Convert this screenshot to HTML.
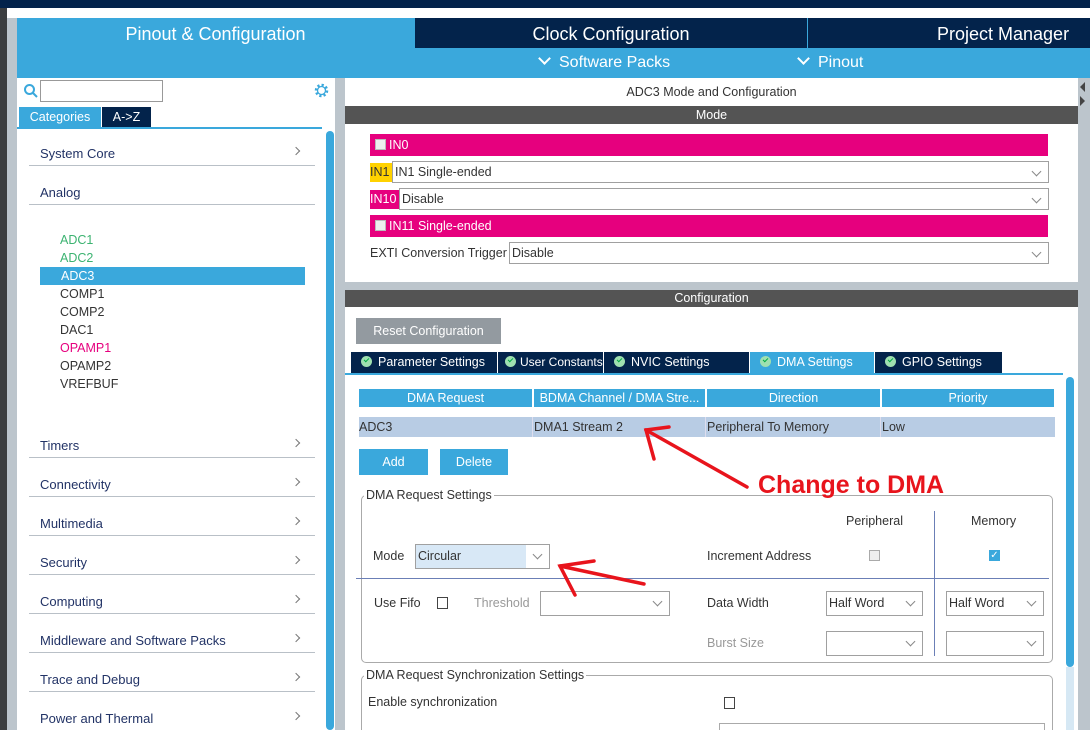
<!DOCTYPE html>
<html style="overflow:hidden;width:1090px;height:730px"><head><meta charset="utf-8"><style>
*{margin:0;padding:0;box-sizing:border-box}
body{width:1090px;height:730px;overflow:hidden;position:relative;background:#bcc5cc;font-family:"Liberation Sans",sans-serif;font-size:12px;color:#333}
.a{position:absolute}
.t{position:absolute;white-space:nowrap}
.cat{position:absolute;left:40px;font-size:13px;color:#223366}
.ln{position:absolute;left:29px;width:286px;height:1px;background:#b9c0c7}
.chev{position:absolute;left:293px;width:6px;height:6px;border-right:1.3px solid #777;border-top:1.3px solid #777;transform:rotate(45deg)}
.sel{position:absolute;border:1px solid #a0a0a0;background:#fff;height:22px;white-space:nowrap}
.sel:after{content:"";position:absolute;right:8px;top:6px;width:6px;height:6px;border-right:1px solid #888;border-bottom:1px solid #888;transform:rotate(45deg)}
.mag{background:#e6007e;color:#fff}
.cb{display:inline-block;width:11px;height:11px;background:#eee;border:1px solid #bbb;vertical-align:-1px;margin:0 3px 0 5px}
.tab{position:absolute;top:352px;height:21px;background:#03234b;color:#fff;font-size:12.5px;line-height:21px;padding-left:10px;white-space:nowrap;overflow:hidden}
.ok{display:inline-block;width:11px;height:11px;border-radius:50%;background:#9fe0b0;margin-right:6px;vertical-align:-1px;position:relative}
.ok:after{content:"";position:absolute;left:3px;top:2px;width:4px;height:2px;border-left:1.5px solid #0a4;border-bottom:1.5px solid #0a4;transform:rotate(-45deg)}
.th{position:absolute;top:389px;height:18px;background:#3aa8dc;color:#fff;font-size:12.5px;text-align:center;line-height:18px;white-space:nowrap;overflow:hidden}
.td{position:absolute;top:417px;height:20px;line-height:20px;font-size:12.5px;color:#333}
.btn{position:absolute;background:#3aa8dc;color:#fff;text-align:center;font-size:12.5px}
.dn{display:inline-block;width:9px;height:9px;border-right:2px solid #fff;border-bottom:2px solid #fff;transform:rotate(45deg);margin-right:10px;vertical-align:4px}
</style></head><body>
<div class="a" style="left:0;top:0;width:7px;height:730px;background:#3c3e40"></div>
<div class="a" style="left:0;top:0;width:1090px;height:8px;background:#03234b"></div>
<div class="a" style="left:7px;top:8px;width:1083px;height:10px;background:#fff"></div>
<div class="a" style="left:17px;top:18px;width:1073px;height:60px;background:#3aa8dc"></div>
<div class="t" style="left:17px;top:24px;width:397px;text-align:center;color:#fff;font-size:18px">Pinout &amp; Configuration</div>
<div class="a" style="left:415px;top:18px;width:392px;height:30px;background:#03234b"></div>
<div class="t" style="left:415px;top:24px;width:392px;text-align:center;color:#fff;font-size:18px">Clock Configuration</div>
<div class="a" style="left:808px;top:18px;width:282px;height:30px;background:#03234b"></div>
<div class="t" style="left:937px;top:24px;color:#fff;font-size:18px">Project Manager</div>
<div class="t" style="left:540px;top:54px;color:#fff;font-size:16px"><span class="dn"></span>Software Packs</div>
<div class="t" style="left:799px;top:54px;color:#fff;font-size:16px"><span class="dn"></span>Pinout</div>

<div class="a" style="left:17px;top:78px;width:318px;height:652px;background:#fff"></div>
<div class="a" style="left:335px;top:78px;width:10px;height:652px;background:#bcc5cc"></div>
<svg class="a" style="left:23px;top:83px" width="16" height="16"><circle cx="6.5" cy="6.5" r="4.5" fill="none" stroke="#3aa8dc" stroke-width="2"/><line x1="10" y1="10" x2="14" y2="14" stroke="#3aa8dc" stroke-width="2"/></svg>
<div class="a" style="left:40px;top:80px;width:123px;height:22px;border:1px solid #999;background:#fff"></div>
<svg class="a" style="left:313px;top:82px" width="17" height="17"><circle cx="8.5" cy="8.5" r="5.5" fill="none" stroke="#3aa8dc" stroke-width="2.5" stroke-dasharray="2.2 2.1"/><circle cx="8.5" cy="8.5" r="4" fill="none" stroke="#3aa8dc" stroke-width="1.3"/></svg>
<div class="a" style="left:19px;top:107px;width:82px;height:20px;background:#3aa8dc;color:#fff;font-size:12.5px;text-align:center;line-height:20px">Categories</div>
<div class="a" style="left:102px;top:107px;width:49px;height:20px;background:#03234b;color:#fff;font-size:12.5px;text-align:center;line-height:20px">A-&gt;Z</div>
<div class="a" style="left:17px;top:127px;width:305px;height:2px;background:#3aa8dc"></div>
<div class="a" style="left:326px;top:131px;width:8px;height:599px;background:#3aa8dc;border-radius:4px"></div>

<div class="cat" style="top:146px">System Core</div><div class="chev" style="top:148px"></div><div class="ln" style="top:165px"></div>
<div class="cat" style="top:185px">Analog</div><div class="ln" style="top:204px"></div>
<div class="cat" style="top:233px;left:60px;color:#3cb371;font-size:12.5px">ADC1</div>
<div class="cat" style="top:251px;left:60px;color:#3cb371;font-size:12.5px">ADC2</div>
<div class="a" style="left:40px;top:267px;width:265px;height:18px;background:#3aa8dc"></div>
<div class="cat" style="top:269px;left:61px;color:#fff;font-size:12.5px">ADC3</div>
<div class="cat" style="top:287px;left:60px;color:#333;font-size:12.5px">COMP1</div>
<div class="cat" style="top:305px;left:60px;color:#333;font-size:12.5px">COMP2</div>
<div class="cat" style="top:323px;left:60px;color:#333;font-size:12.5px">DAC1</div>
<div class="cat" style="top:341px;left:60px;color:#e6007e;font-size:12.5px">OPAMP1</div>
<div class="cat" style="top:359px;left:60px;color:#333;font-size:12.5px">OPAMP2</div>
<div class="cat" style="top:377px;left:60px;color:#333;font-size:12.5px">VREFBUF</div>

<div class="cat" style="top:438px">Timers</div><div class="chev" style="top:440px"></div><div class="ln" style="top:457px"></div>
<div class="cat" style="top:477px">Connectivity</div><div class="chev" style="top:479px"></div><div class="ln" style="top:496px"></div>
<div class="cat" style="top:516px">Multimedia</div><div class="chev" style="top:518px"></div><div class="ln" style="top:535px"></div>
<div class="cat" style="top:555px">Security</div><div class="chev" style="top:557px"></div><div class="ln" style="top:574px"></div>
<div class="cat" style="top:594px">Computing</div><div class="chev" style="top:596px"></div><div class="ln" style="top:613px"></div>
<div class="cat" style="top:633px">Middleware and Software Packs</div><div class="chev" style="top:635px"></div><div class="ln" style="top:652px"></div>
<div class="cat" style="top:672px">Trace and Debug</div><div class="chev" style="top:674px"></div><div class="ln" style="top:691px"></div>
<div class="cat" style="top:711px">Power and Thermal</div><div class="chev" style="top:713px"></div>

<div class="a" style="left:345px;top:78px;width:733px;height:204px;background:#fff"></div>
<div class="a" style="left:1078px;top:78px;width:12px;height:652px;background:#bcc5cc"></div>
<div class="a" style="left:1080px;top:82px;width:0;height:0;border:5px solid transparent;border-right-color:#444;border-left:0"></div>
<div class="a" style="left:1080px;top:96px;width:0;height:0;border:5px solid transparent;border-left-color:#444;border-right:0"></div>
<div class="t" style="left:345px;top:85px;width:733px;text-align:center;font-size:12.5px">ADC3 Mode and Configuration</div>
<div class="a" style="left:345px;top:106px;width:733px;height:18px;background:#545454;color:#fff;text-align:center;line-height:18px;font-size:12.5px">Mode</div>
<div class="a mag" style="left:370px;top:134px;width:678px;height:22px;line-height:22px;font-size:12.5px"><span class="cb"></span>IN0</div>
<div class="a" style="left:370px;top:163px;width:22px;height:19px;background:#ffd200;font-size:12.5px;line-height:19px">IN1</div>
<div class="sel" style="left:392px;top:161px;width:657px;line-height:20px;font-size:12.5px;padding-left:2px">IN1 Single-ended</div>
<div class="a mag" style="left:370px;top:190px;width:29px;height:19px;font-size:12.5px;line-height:19px;color:#fff">IN10</div>
<div class="sel" style="left:399px;top:188px;width:650px;line-height:20px;font-size:12.5px;padding-left:2px">Disable</div>
<div class="a mag" style="left:370px;top:215px;width:678px;height:22px;line-height:22px;font-size:12.5px"><span class="cb"></span>IN11 Single-ended</div>
<div class="t" style="left:370px;top:246px;font-size:12.5px">EXTI Conversion Trigger</div>
<div class="sel" style="left:509px;top:242px;width:540px;line-height:20px;font-size:12.5px;padding-left:2px">Disable</div>

<div class="a" style="left:345px;top:290px;width:733px;height:440px;background:#fff"></div>
<div class="a" style="left:345px;top:290px;width:733px;height:17px;background:#545454;color:#fff;text-align:center;line-height:17px;font-size:12.5px">Configuration</div>
<div class="a" style="left:356px;top:318px;width:145px;height:26px;background:#939aa0;color:#fff;font-size:12.5px;text-align:center;line-height:26px">Reset Configuration</div>
<div class="tab" style="left:351px;width:146px"><span class="ok"></span>Parameter Settings</div>
<div class="tab" style="left:498px;width:105px;padding-left:7px;font-size:12px"><span class="ok" style="margin-right:4px"></span>User Constants</div>
<div class="tab" style="left:604px;width:145px"><span class="ok"></span>NVIC Settings</div>
<div class="tab" style="left:750px;width:124px;background:#3aa8dc"><span class="ok"></span>DMA Settings</div>
<div class="tab" style="left:875px;width:127px"><span class="ok"></span>GPIO Settings</div>
<div class="a" style="left:345px;top:373px;width:718px;height:2px;background:#3aa8dc"></div>
<div class="a" style="left:1066px;top:377px;width:8px;height:290px;background:#3aa8dc;border-radius:4px"></div>
<div class="a" style="left:1066px;top:667px;width:8px;height:63px;background:#d6e8f4"></div>

<div class="th" style="left:359px;width:173px">DMA Request</div>
<div class="th" style="left:534px;width:171px">BDMA Channel / DMA Stre...</div>
<div class="th" style="left:707px;width:173px">Direction</div>
<div class="th" style="left:882px;width:172px">Priority</div>
<div class="a" style="left:359px;top:417px;width:696px;height:20px;background:#b8cce4"></div>
<div class="td" style="left:359px">ADC3</div>
<div class="td" style="left:534px">DMA1 Stream 2</div>
<div class="td" style="left:707px">Peripheral To Memory</div>
<div class="td" style="left:882px">Low</div>
<div class="a" style="left:532px;top:417px;width:1px;height:20px;background:#dde"></div>
<div class="a" style="left:705px;top:417px;width:1px;height:20px;background:#dde"></div>
<div class="a" style="left:880px;top:417px;width:1px;height:20px;background:#dde"></div>
<div class="btn" style="left:359px;top:449px;width:69px;height:26px;line-height:26px">Add</div>
<div class="btn" style="left:440px;top:449px;width:68px;height:26px;line-height:26px">Delete</div>

<div class="a" style="left:361px;top:495px;width:692px;height:168px;border:1px solid #aaa;border-radius:5px"></div>
<div class="t" style="left:364px;top:488px;background:#fff;padding:0 2px;font-size:12.5px">DMA Request Settings</div>
<div class="t" style="left:846px;top:514px;font-size:12.5px">Peripheral</div>
<div class="t" style="left:971px;top:514px;font-size:12.5px">Memory</div>
<div class="a" style="left:934px;top:511px;width:1px;height:145px;background:#6b7fb6"></div>
<div class="a" style="left:356px;top:578px;width:693px;height:1px;background:#6b7fb6"></div>
<div class="t" style="left:373px;top:549px;font-size:12.5px">Mode</div>
<div class="sel" style="left:415px;top:544px;width:135px;height:25px;background:linear-gradient(90deg,#d8e8f6 110px,#fff 110px);line-height:23px;font-size:12.5px;padding-left:2px">Circular</div>
<div class="t" style="left:707px;top:549px;font-size:12.5px">Increment Address</div>
<div class="a" style="left:869px;top:550px;width:11px;height:11px;border:1px solid #aaa;background:#eee"></div>
<div class="a" style="left:989px;top:550px;width:11px;height:11px;background:#3aa8dc;color:#fff;font-size:10px;line-height:11px;text-align:center">✓</div>
<div class="t" style="left:374px;top:596px;font-size:12.5px">Use Fifo</div>
<div class="a" style="left:437px;top:597px;width:11px;height:12px;border:1px solid #444"></div>
<div class="t" style="left:474px;top:596px;font-size:12.5px;color:#999">Threshold</div>
<div class="sel" style="left:540px;top:591px;width:130px;height:25px"></div>
<div class="t" style="left:707px;top:596px;font-size:12.5px">Data Width</div>
<div class="sel" style="left:826px;top:591px;width:97px;height:25px;line-height:23px;font-size:12.5px;padding-left:2px">Half Word</div>
<div class="sel" style="left:946px;top:591px;width:98px;height:25px;line-height:23px;font-size:12.5px;padding-left:2px">Half Word</div>
<div class="t" style="left:707px;top:636px;font-size:12.5px;color:#999">Burst Size</div>
<div class="sel" style="left:826px;top:631px;width:97px;height:25px"></div>
<div class="sel" style="left:946px;top:631px;width:98px;height:25px"></div>

<div class="a" style="left:361px;top:675px;width:692px;height:55px;border:1px solid #aaa;border-bottom:0;border-radius:5px 5px 0 0"></div>
<div class="t" style="left:364px;top:668px;background:#fff;padding:0 2px;font-size:12.5px">DMA Request Synchronization Settings</div>
<div class="t" style="left:368px;top:695px;font-size:12.5px">Enable synchronization</div>
<div class="a" style="left:724px;top:697px;width:11px;height:12px;border:1px solid #444"></div>
<div class="a" style="left:719px;top:723px;width:326px;height:7px;border:1px solid #aaa;border-bottom:0"></div>

<div class="t" style="left:758px;top:471px;color:#e8141c;font-size:25px;font-weight:bold">Change to DMA</div>
<svg class="a" style="left:0;top:0" width="1090" height="730">
<g stroke="#e8141c" stroke-width="3.5" fill="none" stroke-linecap="round">
<line x1="747" y1="487" x2="646" y2="430"/>
<polyline points="654,459 646,430 669,427"/>
<line x1="644" y1="584" x2="560" y2="566"/>
<polyline points="575,595 560,566 594,561"/>
</g></svg>
</body></html>
